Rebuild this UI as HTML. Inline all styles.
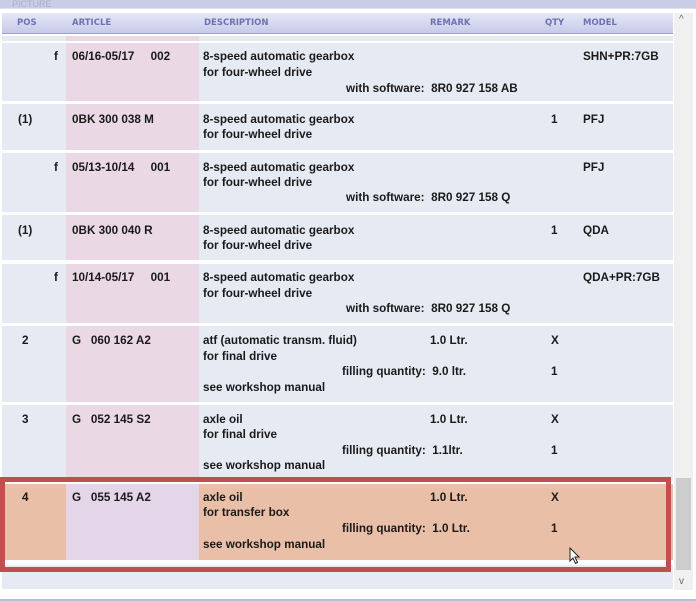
<!DOCTYPE html>
<html><head><meta charset="utf-8"><style>
*{margin:0;padding:0;box-sizing:border-box}
body{width:696px;height:601px;overflow:hidden;background:#dde1ef;font-family:"Liberation Sans",Arial,sans-serif;position:relative}
.top{position:absolute;left:0;top:0;width:696px;height:8px;background:#c9cde6;color:#a9aed0;font-size:9px;padding-left:12px;line-height:8px;overflow:hidden}
.panel{position:absolute;left:0;top:9px;width:696px;height:592px;background:#fff;border-bottom:2px solid #b8bdd8}
.hdr{position:absolute;left:2px;top:13px;width:671px;height:21px;background:linear-gradient(#e6e8f6,#c6cae8);border-bottom:1px solid #9aa0c8}
.hdr span{position:absolute;top:5px;font-family:"DejaVu Sans",sans-serif;font-size:8.5px;font-weight:bold;color:#6d72b3}
.row{position:absolute;left:2px;width:671px;background:#e6eaf3}
.row .art{position:absolute;left:64px;top:0;width:133px;height:100%;background:#ead9e5}
.t{position:absolute;font-size:11.7px;font-weight:bold;color:#1a1a1a;white-space:nowrap;line-height:13px;margin-top:2px}
.sb{position:absolute;left:674px;top:13px;width:19px;height:577px;background:#f0f0f0}
.thumb{position:absolute;left:676px;top:478px;width:15px;height:92px;background:#cdcdcd}
.box{position:absolute;left:0;top:477px;width:671px;height:95px;border:5px solid #c0504f}
</style></head><body>
<div class="top">PICTURE</div>
<div class="panel"></div>
<div class="hdr">
<span style="left:15px">POS</span><span style="left:70px">ARTICLE</span><span style="left:202px">DESCRIPTION</span><span style="left:428px">REMARK</span><span style="left:543px">QTY</span><span style="left:581px">MODEL</span>
</div>
<div class="sb"></div>
<div style="position:absolute;left:679px;top:14px;font-size:10px;color:#666">^</div>
<div style="position:absolute;left:679px;top:576px;font-size:10px;color:#666">v</div>
<div class="thumb"></div>

<div class="row" style="top:36px;height:5px"><div class="art"></div></div>
<div class="row" style="top:43px;height:58px"><div class="art"></div></div>
<div class="row" style="top:104px;height:46px"><div class="art"></div></div>
<div class="row" style="top:153px;height:59px"><div class="art"></div></div>
<div class="row" style="top:215px;height:45px"><div class="art"></div></div>
<div class="row" style="top:264px;height:59px"><div class="art"></div></div>
<div class="row" style="top:326px;height:76px"><div class="art"></div></div>
<div class="row" style="top:405px;height:76px"><div class="art"></div></div>
<div class="row" style="top:484px;height:76px;background:#e9bfa8"><div class="art" style="background:#e4d6e8"></div></div>
<div class="row" style="top:565px;height:24px;background:#e6eaf3"></div>

<div class="t" style="left:54px;top:48px">f</div>
<div class="t" style="left:72px;top:48px">06/16-05/17&nbsp;&nbsp;&nbsp;&nbsp;&nbsp;002</div>
<div class="t" style="left:203px;top:48px">8-speed automatic gearbox</div>
<div class="t" style="left:203px;top:64px">for four-wheel drive</div>
<div class="t" style="left:346px;top:80px">with software:&nbsp; 8R0 927 158 AB</div>
<div class="t" style="left:583px;top:48px">SHN+PR:7GB</div>

<div class="t" style="left:18px;top:111px">(1)</div>
<div class="t" style="left:72px;top:111px">0BK 300 038 M</div>
<div class="t" style="left:203px;top:111px">8-speed automatic gearbox</div>
<div class="t" style="left:203px;top:126px">for four-wheel drive</div>
<div class="t" style="left:551px;top:111px">1</div>
<div class="t" style="left:583px;top:111px">PFJ</div>

<div class="t" style="left:54px;top:159px">f</div>
<div class="t" style="left:72px;top:159px">05/13-10/14&nbsp;&nbsp;&nbsp;&nbsp;&nbsp;001</div>
<div class="t" style="left:203px;top:159px">8-speed automatic gearbox</div>
<div class="t" style="left:203px;top:174px">for four-wheel drive</div>
<div class="t" style="left:346px;top:189px">with software:&nbsp; 8R0 927 158 Q</div>
<div class="t" style="left:583px;top:159px">PFJ</div>

<div class="t" style="left:18px;top:222px">(1)</div>
<div class="t" style="left:72px;top:222px">0BK 300 040 R</div>
<div class="t" style="left:203px;top:222px">8-speed automatic gearbox</div>
<div class="t" style="left:203px;top:237px">for four-wheel drive</div>
<div class="t" style="left:551px;top:222px">1</div>
<div class="t" style="left:583px;top:222px">QDA</div>

<div class="t" style="left:54px;top:269px">f</div>
<div class="t" style="left:72px;top:269px">10/14-05/17&nbsp;&nbsp;&nbsp;&nbsp;&nbsp;001</div>
<div class="t" style="left:203px;top:269px">8-speed automatic gearbox</div>
<div class="t" style="left:203px;top:285px">for four-wheel drive</div>
<div class="t" style="left:346px;top:300px">with software:&nbsp; 8R0 927 158 Q</div>
<div class="t" style="left:583px;top:269px">QDA+PR:7GB</div>

<div class="t" style="left:22px;top:332px">2</div>
<div class="t" style="left:72px;top:332px">G&nbsp;&nbsp; 060 162 A2</div>
<div class="t" style="left:203px;top:332px">atf (automatic transm. fluid)</div>
<div class="t" style="left:430px;top:332px">1.0 Ltr.</div>
<div class="t" style="left:551px;top:332px">X</div>
<div class="t" style="left:203px;top:348px">for final drive</div>
<div class="t" style="left:342px;top:363px">filling quantity:&nbsp; 9.0 ltr.</div>
<div class="t" style="left:551px;top:363px">1</div>
<div class="t" style="left:203px;top:379px">see workshop manual</div>

<div class="t" style="left:22px;top:411px">3</div>
<div class="t" style="left:72px;top:411px">G&nbsp;&nbsp; 052 145 S2</div>
<div class="t" style="left:203px;top:411px">axle oil</div>
<div class="t" style="left:430px;top:411px">1.0 Ltr.</div>
<div class="t" style="left:551px;top:411px">X</div>
<div class="t" style="left:203px;top:426px">for final drive</div>
<div class="t" style="left:342px;top:442px">filling quantity:&nbsp; 1.1ltr.</div>
<div class="t" style="left:551px;top:442px">1</div>
<div class="t" style="left:203px;top:457px">see workshop manual</div>

<div class="t" style="left:22px;top:489px">4</div>
<div class="t" style="left:72px;top:489px">G&nbsp;&nbsp; 055 145 A2</div>
<div class="t" style="left:203px;top:489px">axle oil</div>
<div class="t" style="left:430px;top:489px">1.0 Ltr.</div>
<div class="t" style="left:551px;top:489px">X</div>
<div class="t" style="left:203px;top:504px">for transfer box</div>
<div class="t" style="left:342px;top:520px">filling quantity:&nbsp; 1.0 Ltr.</div>
<div class="t" style="left:551px;top:520px">1</div>
<div class="t" style="left:203px;top:536px">see workshop manual</div>

<div class="box"></div>
<svg style="position:absolute;left:569px;top:547px" width="12" height="18" viewBox="0 0 12 18"><path d="M1 1 L1 14 L4 11 L6.5 16.5 L8.5 15.5 L6 10 L10 10 Z" fill="#fff" stroke="#222" stroke-width="1"/></svg>
</body></html>
